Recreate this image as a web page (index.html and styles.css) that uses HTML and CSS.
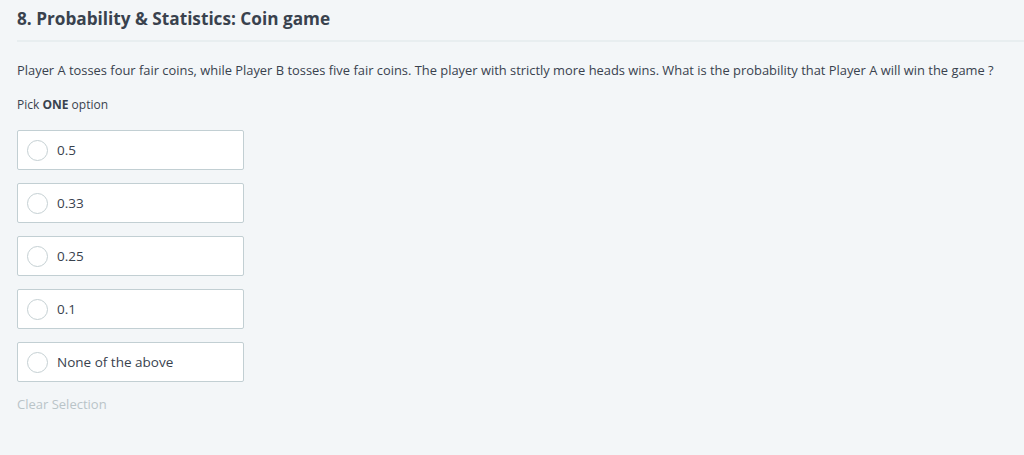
FILE: index.html
```html
<!DOCTYPE html>
<html>
<head>
<meta charset="utf-8">
<link rel="stylesheet" href="styles.css">
</head>
<body>
<div class="page">
  <h1 class="title">8. Probability &amp; Statistics: Coin game</h1>
  <div class="sep"></div>
  <p class="question">Player A tosses four fair coins, while Player B tosses five fair coins. The player with strictly more heads wins. What is the probability that Player A will win the game ?</p>
  <p class="pick">Pick <b>ONE</b> option</p>
  <div class="options">
    <label class="option"><span class="radio"></span><span class="opt-text">0.5</span></label>
    <label class="option"><span class="radio"></span><span class="opt-text">0.33</span></label>
    <label class="option"><span class="radio"></span><span class="opt-text">0.25</span></label>
    <label class="option"><span class="radio"></span><span class="opt-text">0.1</span></label>
    <label class="option"><span class="radio"></span><span class="opt-text">None of the above</span></label>
  </div>
  <div class="clear">Clear Selection</div>
</div>
</body>
</html>
```
FILE: styles.css
```css
html, body {
  margin: 0;
  padding: 0;
  background: #f3f6f8;
}
body {
  font-family: "Open Sans", "Liberation Sans", sans-serif;
  color: #39424e;
}
.page {
  padding: 7px 0 0 17px;
}
.title {
  margin: 0;
  font-size: 17.2px;
  font-weight: 700;
  line-height: 24px;
  color: #39424e;
}
.sep {
  height: 2px;
  background: #e8eef0;
  margin-top: 9px;
}
.question {
  margin: 19px 0 0;
  font-size: 12.9px;
  line-height: 18px;
}
.pick {
  margin: 18px 0 0;
  font-size: 12px;
  line-height: 16px;
}
.options {
  display: flex;
  flex-direction: column;
  gap: 13px;
  margin-top: 17px;
}
.option {
  box-sizing: border-box;
  width: 227px;
  height: 40px;
  background: #fff;
  border: 1px solid #c2cfd3;
  border-radius: 2px;
  display: flex;
  align-items: center;
  padding-left: 9px;
}
.radio {
  box-sizing: border-box;
  width: 21px;
  height: 21px;
  border: 1px solid #c5d0d3;
  border-radius: 50%;
  background: #fff;
}
.opt-text {
  margin-left: 9px;
  font-size: 13.5px;
}
.clear {
  margin-top: 13px;
  font-size: 13px;
  color: #b9c4c8;
}
```
